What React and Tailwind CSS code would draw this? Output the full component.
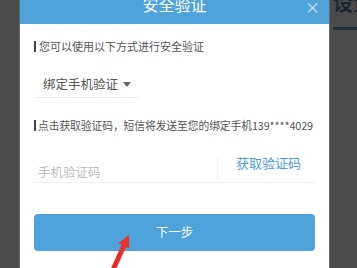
export default function App() {
  const font = { fontFamily: '"Noto Sans CJK SC", "Noto Sans", sans-serif' };
  return (
    <div className="relative w-[357px] h-[268px] overflow-hidden bg-[#4b4b4b] flex" style={font}>
      <div className="ml-[19px] w-[311px] mt-[-16px] h-[290px] bg-white flex flex-col rounded-b-[3px] border-x border-[#6a6a6a] shrink-0">
        {/* header */}
        <div className="relative h-[40px] bg-[#4fa3da] flex items-center justify-center shrink-0">
          <span className="text-white text-[16px] leading-none">安全验证</span>
          <span className="absolute right-[9px] top-[15px] text-[#cfe6f6] text-[15px] leading-none">×</span>
        </div>

        <div className="px-[14px] flex flex-col">
          <div className="mt-[16px] flex items-center h-[12px]">
            <span className="w-[2px] h-[11px] bg-[#444] mr-[3px] shrink-0" />
            <span className="text-[11px] text-[#555] leading-none">您可以使用以下方式进行安全验证</span>
          </div>

          <div className="mt-[26px] w-[104px] ml-[1px] pb-[6px] border-b border-[#eeeeee] flex items-center">
            <span className="ml-[8px] text-[12.5px] text-[#555] leading-none">绑定手机验证</span>
            <svg width="8" height="5" viewBox="0 0 8 5" className="ml-[5px]">
              <polygon points="0,0 8,0 4,5" fill="#666" />
            </svg>
          </div>

          <div className="mt-[22px] flex items-center h-[12px]">
            <span className="w-[2px] h-[11px] bg-[#444] mr-[2px] shrink-0" />
            <span className="text-[10.8px] tracking-[-0.1px] text-[#555] leading-none whitespace-nowrap">点击获取验证码，短信将发送至您的绑定手机139****4029</span>
          </div>

          <div className="mt-[23px] h-[28px] flex border-b border-[#f0f0f0]">
            <div className="flex-1 flex items-end pb-[3px]">
              <span className="ml-[4px] text-[12.5px] text-[#bdbdbd] leading-none">手机验证码</span>
            </div>
            <div className="w-[98px] border-l border-[#f0f0f0] my-[3px] flex items-start justify-center">
              <span className="mt-[-2px] ml-[4px] text-[13px] text-[#4a9bd8] leading-none">获取验证码</span>
            </div>
          </div>

          <button className="mt-[31px] h-[37px] w-full rounded-[4px] bg-[#4fa3da] text-white text-[12.5px] leading-none">
            下一步
          </button>
        </div>
      </div>

      <div className="flex-1 flex flex-col pl-[3px] overflow-hidden">
        <span className="mt-[-7px] text-[20px] font-bold text-[#1c2633] leading-none whitespace-nowrap">设置</span>
        <div className="mt-[14px] h-[3px] bg-[#20303f]" />
      </div>

      <svg className="absolute left-0 top-0 pointer-events-none" width="357" height="268">
        <polygon
          points="129,235 129.2,248.4 126.05,246.9 114.25,273.1 109.75,270.9 121.55,244.7 118.4,243.2"
          fill="#e8302a"
        />
      </svg>
    </div>
  );
}
